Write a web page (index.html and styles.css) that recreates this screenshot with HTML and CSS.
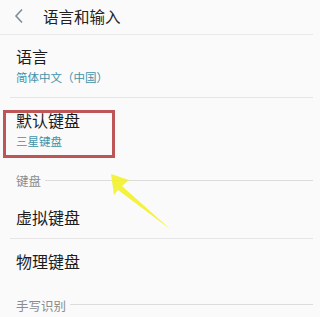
FILE: index.html
```html
<!DOCTYPE html>
<html lang="zh-CN">
<head>
<meta charset="utf-8">
<link rel="stylesheet" href="styles.css">
</head>
<body>
<div class="page">
  <header class="bar">
    <svg class="back" width="10" height="16" viewBox="0 0 10 16"><path d="M8 1.5 L2 8 L8 14.5" fill="none" stroke="#7e8d9a" stroke-width="1.6"/></svg>
    <span class="bar-title">语言和输入</span>
  </header>
  <div class="item two">
    <div class="item-title">语言</div>
    <div class="item-sub">简体中文（中国）</div>
  </div>
  <div class="item two last">
    <div class="item-title">默认键盘</div>
    <div class="item-sub">三星键盘</div>
    <div class="mark"></div>
  </div>
  <div class="section"><span>键盘</span><i class="rule"></i></div>
  <div class="item one">
    <div class="item-title">虚拟键盘</div>
  </div>
  <div class="item one last tall">
    <div class="item-title">物理键盘</div>
  </div>
  <div class="section s2"><span>手写识别</span><i class="rule"></i></div>
  <svg class="arrow" width="313" height="317" viewBox="0 0 313 317">
    <polygon points="111,174 129,180 122,186 170,229 118,190 114,195" fill="#f2f22a" opacity="0.9"/>
  </svg>
</div>
</body>
</html>
```
FILE: styles.css
```css
html, body {
  margin: 0;
  padding: 0;
  background: #fafafa;
}
.page {
  position: relative;
  width: 313px;
  height: 317px;
  overflow: hidden;
  font-family: "Noto Sans CJK SC", "Noto Sans", sans-serif;
  background: #fafafa;
}
.bar {
  height: 34px;
  border-bottom: 1px solid #e9e9e9;
  display: flex;
  align-items: center;
}
.back {
  margin-left: 14px;
  margin-top: -2px;
}
.bar-title {
  margin-left: 19px;
  font-size: 15.5px;
  line-height: 20px;
  color: #222;
  margin-top: -2px;
}
.item {
  position: relative;
  margin-left: 10px;
  padding-left: 6px;
  border-bottom: 1px solid #e6e6e6;
}
.item.two {
  padding-top: 11px;
  height: 51px;
}
.item.two.last {
  border-bottom: none;
  padding-top: 12px;
  height: 56px;
}
.item-title {
  font-size: 16px;
  line-height: 20px;
  color: #1c1c1c;
}
.item-sub {
  margin-top: 3px;
  font-size: 11.5px;
  line-height: 16px;
  color: #3f93aa;
}
.item.one {
  height: 42px;
  display: flex;
  align-items: center;
}
.item.one.last {
  border-bottom: none;
  height: 44px;
}
.mark {
  position: absolute;
  left: -7px;
  top: 12px;
  width: 106px;
  height: 42px;
  border: 3px solid #bd5656;
}
.section {
  height: 30px;
  display: flex;
  align-items: center;
  padding-left: 16px;
  gap: 4px;
}
.section span {
  font-size: 12.5px;
  line-height: 16px;
  color: #8c8c8c;
}
.section .rule {
  flex: 1;
  height: 1px;
  background: #dcdcdc;
  margin-top: -2px;
}
.section.s2 {
  height: 40px;
  align-items: flex-start;
  padding-top: 15px;
  box-sizing: border-box;
}
.section.s2 .rule {
  margin-top: 6px;
}
.arrow {
  position: absolute;
  left: 0;
  top: 0;
  pointer-events: none;
}
```
